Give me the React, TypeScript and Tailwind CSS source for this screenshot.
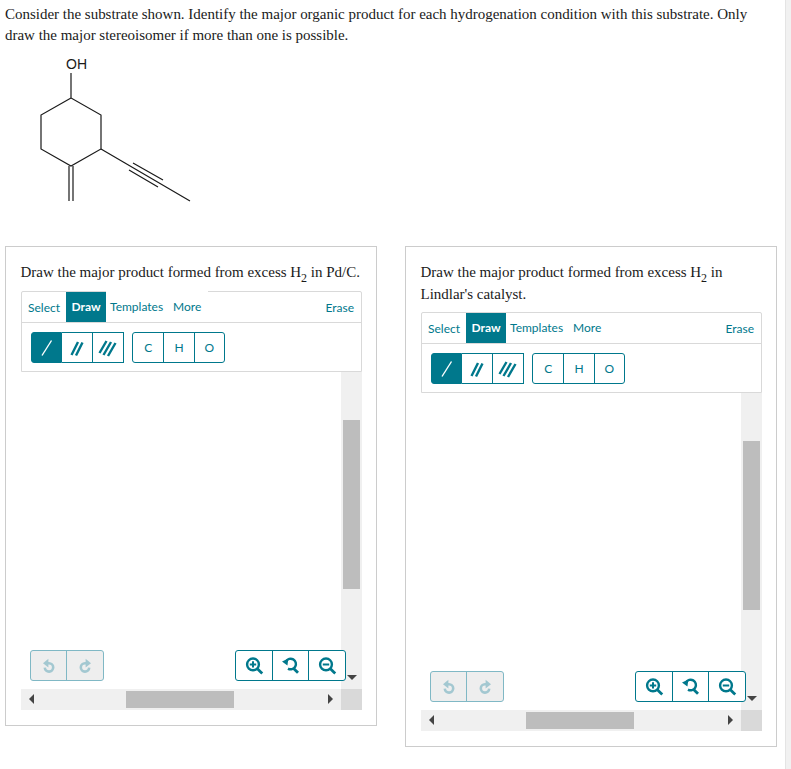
export default function App() {
  return (
    <div className="flex h-[769px] w-[791px] overflow-hidden bg-white font-['Liberation_Serif',serif] text-[15px] tracking-[-0.013px] text-[#1a1a1a]">
      <div className="w-[785px] pl-[5px]">
        <p className="w-[760px] pt-[4px] leading-[21px]">
          Consider the substrate shown. Identify the major organic product for each hydrogenation condition with this substrate. Only draw the major stereoisomer if more than one is possible.
        </p>
        <Molecule />
        <div className="flex items-start gap-[28px]">
          <Panel topGap>
            Draw the major product formed from excess H<sub className="static align-[-5px] text-[12px] leading-none">2</sub> in Pd/C.
          </Panel>
          <Panel>
            Draw the major product formed from excess H<sub className="static align-[-5px] text-[12px] leading-none">2</sub> in Lindlar's catalyst.
          </Panel>
        </div>
      </div>
      <div className="w-[6px] border-l border-[#e4e4e4] bg-[#f1f1f1]" />
    </div>
  );
}

function Molecule() {
  return (
    <svg width="200" height="200" viewBox="5 46 200 200" className="block" fill="none" stroke="#1a1a1a" strokeWidth="1.2">
      <text x="66" y="69" fontFamily="Liberation Sans" fontSize="14" fill="#1a1a1a" stroke="none">OH</text>
      <path d="M71 73V98L101 115V149L71 166L41 149V115L71 98" />
      <path d="M69 166V201M73 166V201" />
      <path d="M101 149L190 201M133 163L163 180M129 170L158 187" />
    </svg>
  );
}

function Panel({ children, topGap }: { children: React.ReactNode; topGap?: boolean }) {
  return (
    <div className="w-[372px] border border-[#cccccc] p-[15px]">
      <p className="mb-[7px] -ml-[0.5px] leading-[21px]">{children}</p>
      <Editor topGap={topGap} />
    </div>
  );
}

function Editor({ topGap }: { topGap?: boolean }) {
  return (
    <div className="relative w-[341px] font-['Lato',sans-serif] text-[12px] tracking-normal text-[#00788c]">
      {/* the left editor's top edge breaks off after the Draw tab */}
      {topGap && <div className="absolute top-0 left-[85px] h-px w-[102px] bg-white" />}
      <div className="rounded-t-[2px] border border-[#d9d9d9]">
        <div className="flex h-[31px] items-stretch border-b border-[#d9d9d9]">
          <span className="ml-[6px] self-center pt-[1px]">Select</span>
          <span className="ml-[6px] flex w-[40px] items-center justify-center bg-[#00788c] font-bold text-white">Draw</span>
          <span className="ml-[4px] self-center">Templates</span>
          <span className="ml-[10px] self-center">More</span>
          <span className="mr-[7px] ml-auto self-center pt-[1px]">Erase</span>
        </div>
        <div className="flex h-[48px] items-start gap-[8px] pt-[9px] pl-[9px]">
          <div className="flex h-[31px]">
            <BondButton count={1} active first />
            <BondButton count={2} />
            <BondButton count={3} />
          </div>
          <div className="flex h-[31px] overflow-hidden rounded-[3px] border border-[#00788c]">
            <AtomButton label="C" />
            <AtomButton label="H" divider />
            <AtomButton label="O" divider />
          </div>
        </div>
      </div>

      <div className="flex h-[317px]">
        <div className="flex-1" />
        <div className="flex w-[21px] flex-col bg-[#f0f0f0] px-[2px] pt-[48px]">
          <div className="h-[169px] bg-[#bdbdbd]" />
        </div>
      </div>
      <div className="flex h-[21px]">
        <div className="relative flex-1 bg-[#f0f0f0]">
          <div className="absolute top-[10px] left-[8px] h-0 w-0 -translate-y-1/2 border-y-[5px] border-r-[5px] border-y-transparent border-r-[#444444]" />
          <div className="absolute top-[2px] left-[105px] h-[17px] w-[108px] bg-[#bdbdbd]" />
          <div className="absolute top-[10px] right-[8px] h-0 w-0 -translate-y-1/2 border-y-[5px] border-l-[5px] border-y-transparent border-l-[#444444]" />
        </div>
        <div className="w-[21px] bg-[#d9d9d9]" />
      </div>

      {/* undo and zoom float over the canvas */}
      <div className="absolute bottom-[29px] left-[9px] flex h-[31px] w-[74px] overflow-hidden rounded-[3px] border border-[#80b8c5] bg-[#eeeeee] text-[#a3c8d1]">
        <div className="flex w-[36px] items-center justify-center border-r border-[#80b8c5]"><HistoryIcon /></div>
        <div className="flex flex-1 items-center justify-center"><HistoryIcon redo /></div>
      </div>
      <div className="absolute bottom-[29px] left-[214px] flex h-[31px] w-[111px] overflow-hidden rounded-[3px] border border-[#00788c] bg-white">
        <div className="flex w-[36px] items-center justify-center"><ZoomIcon kind="plus" /></div>
        <div className="flex w-[37px] items-center justify-center border-x border-[#00788c]"><ZoomIcon kind="reset" /></div>
        <div className="flex flex-1 items-center justify-center"><ZoomIcon kind="minus" /></div>
      </div>
      <div className="absolute bottom-[30px] left-[326px] h-0 w-0 border-x-[5px] border-t-[5px] border-x-transparent border-t-[#444444]" />
    </div>
  );
}

function BondButton({ count, active, first }: { count: number; active?: boolean; first?: boolean }) {
  return (
    <div
      className={
        'flex w-[31px] items-center justify-center border-y border-r border-[#00788c] ' +
        (active ? 'bg-[#00788c] ' : 'bg-white ') +
        (first ? 'rounded-l-[3px] border-l ' : '')
      }
    >
      <svg width="20" height="18" viewBox="0 0 20 18" stroke={active ? '#ffffff' : '#00788c'} strokeWidth={count === 1 ? 1.4 : 2.4}>
        {count === 1 && <path d="M5 16.5L14.5 1.5" />}
        {count === 2 && <path d="M4.5 16L11 3M9 16.5L15.5 3.5" />}
        {count === 3 && <path d="M1.5 14L8.5 2M5.5 16L13 3M10 17L17.5 4" />}
      </svg>
    </div>
  );
}

function AtomButton({ label, divider }: { label: string; divider?: boolean }) {
  return (
    <div className={'flex w-[30.33px] items-center justify-center ' + (divider ? 'border-l border-[#00788c]' : '')}>
      {label}
    </div>
  );
}

function HistoryIcon({ redo }: { redo?: boolean }) {
  return (
    <svg width="14" height="16" viewBox="0 0 14 16" fill="none" stroke="currentColor" strokeWidth="2.6" className={redo ? '-scale-x-100' : ''}>
      <path d="M5.5 5.2H7A4.2 4.2 0 1 1 2.8 9.6" />
      <path d="M1 5.2L6.4 0.8V9.6Z" fill="currentColor" stroke="none" />
    </svg>
  );
}

function ZoomIcon({ kind }: { kind: 'plus' | 'minus' | 'reset' }) {
  return (
    <svg width="19" height="18" viewBox="0 0 19 18" fill="none" stroke="currentColor" strokeWidth="2.4">
      {kind === 'reset' ? (
        <>
          <path d="M5 4.4A5.3 5.3 0 1 1 7 11.6" />
          <path d="M1 4.4L7.4 1.6L6.4 8.4Z" fill="currentColor" stroke="none" />
          <path d="M12.6 11.4L17 15.8" strokeWidth="2.8" />
        </>
      ) : (
        <>
          <circle cx="8" cy="7.4" r="5.9" />
          <path d={kind === 'plus' ? 'M4.8 7.4H11.2M8 4.2V10.6' : 'M4.8 7.4H11.2'} strokeWidth="2" />
          <path d="M12.4 11.8L17.2 16.4" strokeWidth="2.8" />
        </>
      )}
    </svg>
  );
}
